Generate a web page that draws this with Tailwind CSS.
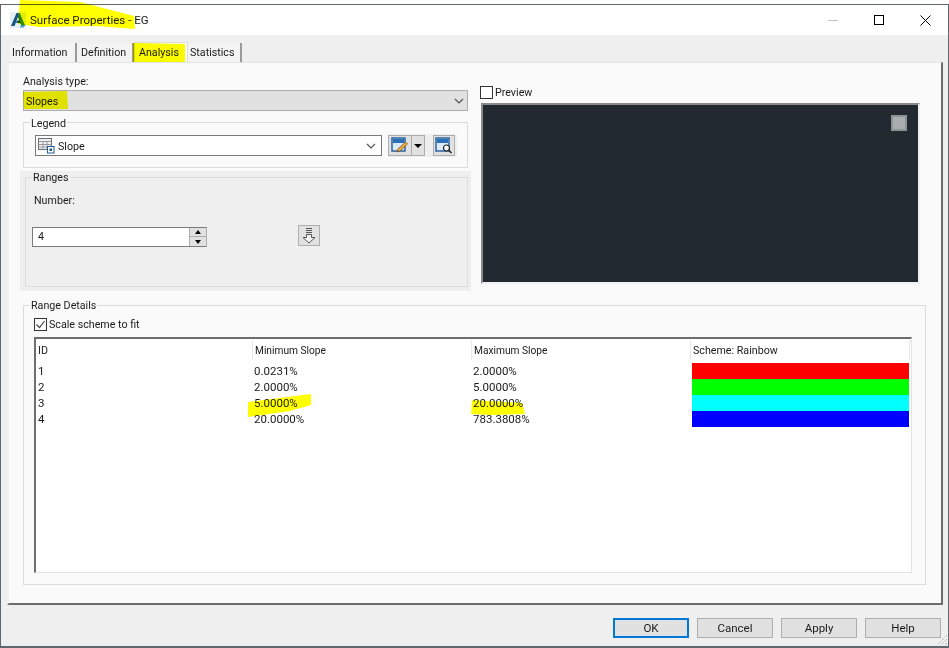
<!DOCTYPE html>
<html lang="en">
<head>
<meta charset="UTF-8">
<title>Surface Properties - EG</title>
<script src="https://cdn.jsdelivr.net/npm/@tailwindcss/browser@4"></script>
</head>
<body class="bg-white">
<div class="relative w-[949px] h-[648px] overflow-hidden pt-[4px] font-['Roboto',sans-serif] text-[10.7px] leading-[14px] text-[#1a1a1a]">
  <div class="h-[644px] flex flex-col bg-[#efefef] border border-[#5d6870] border-b-2">

    <!-- title bar -->
    <div class="h-[30px] bg-white flex items-center shrink-0">
      <svg class="ml-[9px] w-[16px] h-[16px]" viewBox="0 0 16 16">
        <rect width="16" height="16" fill="#e4eef4"/>
        <path d="M1 14 L6.5 1 H9.5 L15 14 H11.5 L10.3 11 H6 L7 8.5 H9.4 L8 4.8 L4.5 14 Z" fill="#14557f"/>
        <path d="M8 1 H9.5 L15 14 H11.5 Z" fill="#2f8f6a"/>
        <rect x="10" y="14" width="4" height="1.5" fill="#5aa7d8"/>
      </svg>
      <span class="ml-[4px] text-[11.5px]">Surface Properties - EG</span>
      <div class="ml-auto flex items-center">
        <div class="w-[46px] h-[30px] flex items-center justify-center"><div class="w-[10px] h-px bg-[#c4c4c4]"></div></div>
        <div class="w-[46px] h-[30px] flex items-center justify-center"><div class="w-[10px] h-[10px] border border-black"></div></div>
        <div class="w-[46px] h-[30px] flex items-center justify-center">
          <svg class="w-[11px] h-[11px]" viewBox="0 0 11 11"><path d="M.5 .5 L10.5 10.5 M10.5 .5 L.5 10.5" stroke="#000" fill="none"/></svg>
        </div>
      </div>
    </div>

    <!-- tabs -->
    <div class="flex items-end h-[27px] pl-[9px] shrink-0">
      <div class="h-[19px] w-[67px] pl-[2px] flex items-center bg-[#f3f3f3] border-r-2 border-[#9a9a9a]">Information</div>
      <div class="h-[19px] w-[56px] ml-[1px] pl-[3px] flex items-center bg-[#f3f3f3] border-r-2 border-[#9a9a9a]">Definition</div>
      <div class="h-[20px] w-[54px] pl-[4px] pt-[1px] flex items-center bg-[#fafafa] border-t border-x border-[#dcdcdc]">Analysis</div>
      <div class="h-[19px] w-[54px] pl-[2px] flex items-center bg-[#f3f3f3] border-r-2 border-[#9a9a9a]">Statistics</div>
    </div>

    <!-- tab panel -->
    <div class="ml-[6px] w-[936px] h-[543px] shrink-0 bg-[#fafafa] border-t border-[#e3e3e3] border-l-2 border-l-[#f0f0f0] border-r-2 border-r-[#6d6d6d] border-b-2 border-b-[#6d6d6d]">
      <div class="flex">
        <!-- left column -->
        <div class="ml-[11px] w-[451px] pt-[11px]">
          <div class="pl-[3px] pt-[2px] h-[14px] flex items-center">Analysis type:</div>
          <div class="ml-[3px] mt-[2px] w-[445px] h-[21px] bg-[#e1e1e1] border border-[#adadad] pl-[2px] flex items-center justify-between">
            <span class="pt-[2px]">Slopes</span>
            <svg class="mr-[3px] w-[10px] h-[6px]" viewBox="0 0 10 6"><path d="M1 1 L5 5 L9 1" stroke="#555" fill="none" stroke-width="1.2"/></svg>
          </div>

          <div class="relative ml-[3px] mt-[11px] w-[445px] h-[46px] border border-[#dcdcdc] pt-[12px] pl-[11px]">
            <span class="absolute left-[6px] -top-[6px] px-[1px] bg-[#fafafa]">Legend</span>
            <div class="flex items-center h-[21px]">
              <div class="w-[347px] h-[21px] bg-white border border-[#7a7a7a] flex items-center pl-[2px]">
                <svg class="w-[17px] h-[17px]" viewBox="0 0 17 17">
                  <rect x=".5" y="1.5" width="13" height="11" fill="#eef1f4" stroke="#6b6b6b"/>
                  <path d="M.5 4.5 H13.5 M.5 7.5 H13.5 M.5 10 H13.5 M5 4.5 V12.5 M9 4.5 V12.5" stroke="#9a9a9a" fill="none"/>
                  <rect x="9.5" y="9.5" width="6.5" height="6.5" fill="#fff" stroke="#1f5c99"/>
                  <rect x="11.5" y="11.5" width="2.5" height="2.5" fill="#1f5c99"/>
                </svg>
                <span class="ml-[3px] pt-[2px]">Slope</span>
                <svg class="ml-auto mr-[5px] w-[10px] h-[6px]" viewBox="0 0 10 6"><path d="M1 1 L5 5 L9 1" stroke="#555" fill="none" stroke-width="1.2"/></svg>
              </div>
              <div class="ml-[6px] flex items-center bg-[#efefef] h-[23px] w-[69px]">
                <div class="w-[37px] h-[21px] bg-[#e1e1e1] border border-[#adadad] flex">
                  <div class="w-[22px] flex items-center justify-center">
                    <svg class="w-[18px] h-[17px]" viewBox="0 0 18 17">
                      <rect x="1" y="1" width="13" height="13" fill="#dbe8f5" stroke="#1f5c99" stroke-width="1.4"/>
                      <rect x="2" y="2" width="11" height="4" fill="#2a6fb8"/>
                      <path d="M6 15 L7 12 L14.5 5 L16.5 7 L9 14 Z" fill="#f0b040" stroke="#6b3a10" stroke-width=".7"/>
                    </svg>
                  </div>
                  <div class="w-[13px] border-l border-[#adadad] flex items-center justify-center">
                    <div class="w-0 h-0 border-x-[4px] border-x-transparent border-t-[4px] border-t-black"></div>
                  </div>
                </div>
                <div class="ml-[8px] w-[22px] h-[21px] bg-[#e1e1e1] border border-[#adadad] flex items-center justify-center">
                  <svg class="w-[18px] h-[17px]" viewBox="0 0 18 17">
                    <rect x="1" y="1" width="13" height="13" fill="#dbe8f5" stroke="#1f5c99" stroke-width="1.4"/>
                    <rect x="2" y="2" width="11" height="4" fill="#2a6fb8"/>
                    <circle cx="11.5" cy="11" r="3" fill="#fff" stroke="#222" stroke-width="1.2"/>
                    <path d="M13.5 13 L16.5 16" stroke="#222" stroke-width="1.6"/>
                  </svg>
                </div>
              </div>
            </div>
          </div>

          <div class="mt-[3px] h-[120px] bg-[#efefef] pt-[6px] pl-[5px]">
            <div class="relative w-[443px] h-[110px] border border-[#dcdcdc] pl-[6px] pt-[16px]">
              <span class="absolute left-[6px] -top-[7px] px-[1px] bg-[#efefef]">Ranges</span>
              <div class="h-[14px] pl-[2px] flex items-center">Number:</div>
              <div class="mt-[19px] flex items-center">
                <div class="w-[175px] h-[20px] bg-white border border-[#7a7a7a] border-r-[#adadad] flex items-center justify-between pl-[5px]">
                  <span>4</span>
                  <div class="w-[17px] h-[18px] bg-[#e1e1e1] border-l border-[#adadad] flex flex-col">
                    <div class="h-[9px] flex items-center justify-center border-b border-[#adadad]"><div class="w-0 h-0 border-x-[3.5px] border-x-transparent border-b-[4px] border-b-black"></div></div>
                    <div class="h-[9px] flex items-center justify-center"><div class="w-0 h-0 border-x-[3.5px] border-x-transparent border-t-[4px] border-t-black"></div></div>
                  </div>
                </div>
                <div class="ml-[91px] -mt-[4px] w-[22px] h-[21px] bg-[#e1e1e1] border border-[#adadad] flex items-center justify-center">
                  <svg class="w-[14px] h-[17px]" viewBox="0 0 14 17">
                    <path d="M4 1.5 H10 M4 3.5 H10 M4 5.5 H10" stroke="#555" fill="none"/>
                    <path d="M4.5 7.5 H9.5 V10.5 H13 L7 16 L1 10.5 H4.5 Z" fill="#f4f4f4" stroke="#555"/>
                  </svg>
                </div>
              </div>
            </div>
          </div>
        </div>

        <!-- preview column -->
        <div class="ml-[9px] pt-[22px]">
          <div class="flex items-center h-[14px]">
            <div class="w-[13px] h-[13px] bg-white border border-[#333]"></div>
            <span class="ml-[2px] pt-[2px]">Preview</span>
          </div>
          <div class="mt-[4px] ml-px w-[439px] h-[181px] bg-[#222930] border-2 border-[#8a8a8a] border-r-[#f0f0f0] border-b-[#f0f0f0] relative">
            <div class="absolute top-[10px] right-[11px] w-[16px] h-[16px] bg-[#a9adb0] border-2 border-[#8e9295]"></div>
          </div>
        </div>
      </div>

      <!-- range details -->
      <div class="relative ml-[14px] mt-[14px] w-[903px] h-[280px] border border-[#dcdcdc] pt-[11px] pl-[10px]">
        <span class="absolute left-[6px] -top-[7px] px-[1px] bg-[#fafafa]">Range Details</span>
        <div class="flex items-center h-[14px]">
          <div class="w-[13px] h-[13px] bg-white border border-[#333] flex items-center justify-center">
            <svg class="w-[11px] h-[11px]" viewBox="0 0 11 11"><path d="M1.5 5.5 L4.5 8.5 L9.5 2" stroke="#444" fill="none" stroke-width="1.2"/></svg>
          </div>
          <span class="ml-[2px] pt-[2px]">Scale scheme to fit</span>
        </div>
        <div class="mt-[6px] w-[878px] h-[236px] bg-white border-2 border-[#6e6e6e] border-r-[#e3e3e3] border-b-[#e3e3e3] border-r-1 border-b-1 pt-[1px]">
          <div class="grid grid-cols-[217px_219px_219px_219px] h-[20px]">
            <div class="pl-[2px] pt-[2px] flex items-center border-r border-[#e8e8e8]">ID</div>
            <div class="pl-[2px] pt-[2px] flex items-center border-r border-[#e8e8e8] text-[10.2px]">Minimum Slope</div>
            <div class="pl-[2px] pt-[2px] flex items-center border-r border-[#e8e8e8] text-[10.2px]">Maximum Slope</div>
            <div class="pl-[2px] pt-[2px] flex items-center border-r border-[#e8e8e8]">Scheme: Rainbow</div>
          </div>
          <div class="mt-[3px] grid grid-cols-[217px_219px_219px_218px] auto-rows-[16px] text-[11.5px]">
            <div class="pl-[2px] flex items-center">1</div><div class="pl-px flex items-center">0.0231%</div><div class="pl-px flex items-center">2.0000%</div><div class="ml-px bg-[#ff0000]"></div>
            <div class="pl-[2px] flex items-center">2</div><div class="pl-px flex items-center">2.0000%</div><div class="pl-px flex items-center">5.0000%</div><div class="ml-px bg-[#00ff00]"></div>
            <div class="pl-[2px] flex items-center">3</div><div class="pl-px flex items-center">5.0000%</div><div class="pl-px flex items-center">20.0000%</div><div class="ml-px bg-[#00ffff]"></div>
            <div class="pl-[2px] flex items-center">4</div><div class="pl-px flex items-center">20.0000%</div><div class="pl-px flex items-center">783.3808%</div><div class="ml-px bg-[#0000ff]"></div>
          </div>
        </div>
      </div>
    </div>

    <!-- dialog buttons -->
    <div class="relative flex-1 flex justify-end items-start gap-[8px] pt-[13px] pr-[7px] text-[11.5px]">
      <button class="w-[76px] h-[20px] bg-[#e1e1e1] border-2 border-[#0078d7]">OK</button>
      <button class="w-[76px] h-[20px] bg-[#e1e1e1] border border-[#adadad]">Cancel</button>
      <button class="w-[76px] h-[20px] bg-[#e1e1e1] border border-[#adadad]">Apply</button>
      <button class="w-[76px] h-[20px] bg-[#e1e1e1] border border-[#adadad]">Help</button>
      <svg class="absolute right-0 bottom-0 w-[12px] h-[12px]" viewBox="0 0 12 12"><path d="M11 1 L1 11 M11 5 L5 11 M11 9 L9 11" stroke="#a8a8a8" fill="none" stroke-dasharray="1 1"/></svg>
    </div>
  </div>

  <!-- yellow marker over the screenshot -->
  <svg class="absolute inset-0 w-[949px] h-[648px] mix-blend-multiply pointer-events-none" viewBox="0 0 949 648">
    <g fill="#ffff00">
      <path d="M20 0 L80 2 L134 16 L135 29 L95 26 L40 27 L18 24 Z"/>
      <path d="M133 43 L185 44 L185 62 L133 62 Z"/>
      <path d="M23 92 L67 91 L68 109 L24 109 Z"/>
      <path d="M248 402 L311 394 L311 405 L290 411 L248 417 Z"/>
      <path d="M472 400 L522 403 L525 414 L490 415 L471 414 Z"/>
    </g>
  </svg>
</div>
</body>
</html>
